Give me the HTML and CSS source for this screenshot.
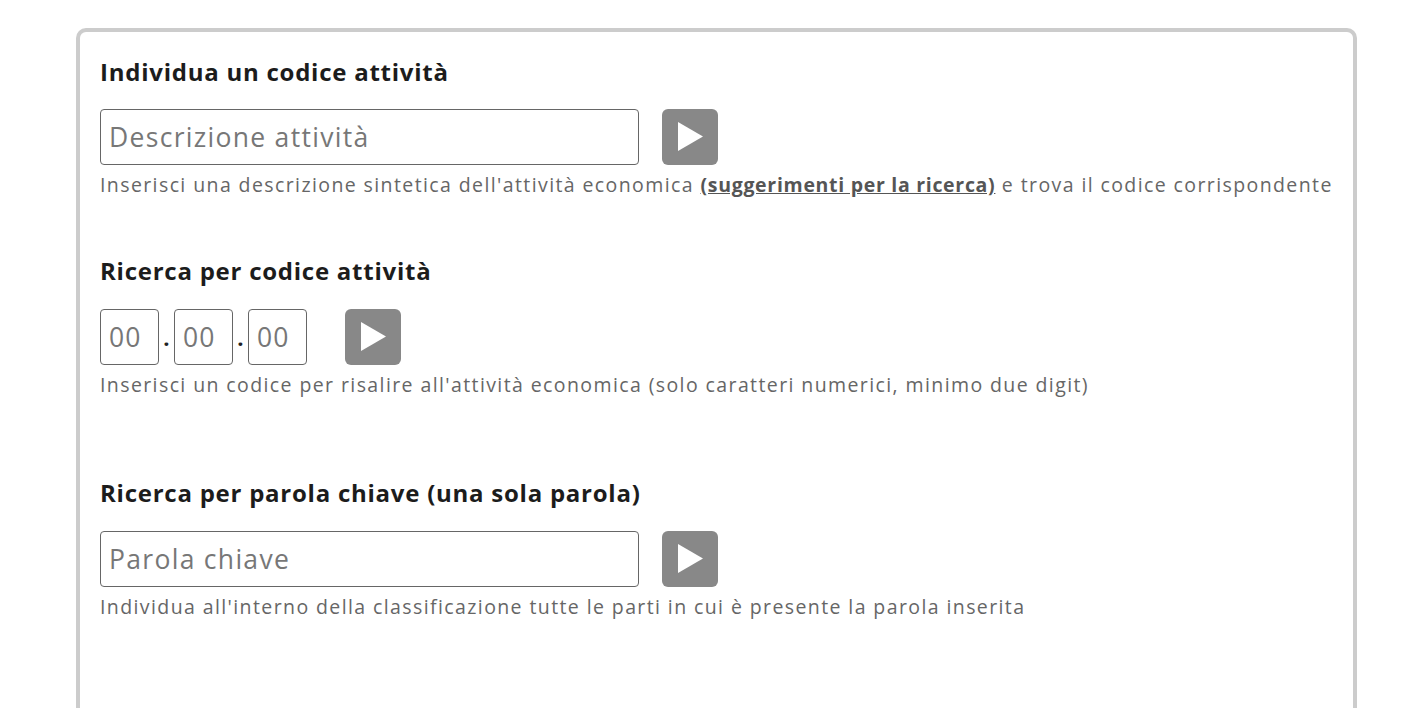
FILE: index.html
```html
<!DOCTYPE html>
<html lang="it">
<head>
  <meta charset="UTF-8">
  <title>Ricerca codice attività</title>
  <link rel="stylesheet" href="styles.css">
</head>
<body>

  <div class="panel">

    <div class="search-block first">
      <h2>Individua un codice attività</h2>
      <div class="search-row">
        <input type="text" class="text-input" placeholder="Descrizione attività">
        <button class="go-btn" type="button" aria-label="Cerca">
          <svg viewBox="0 0 56 56" width="56" height="56"><polygon points="16,13 41,27.5 16,42" fill="#fff"/></svg>
        </button>
      </div>
      <p class="help">Inserisci una descrizione sintetica dell'attività economica <a href="#">(suggerimenti per la ricerca)</a> e trova il codice corrispondente</p>
    </div>

    <div class="search-block">
      <h2>Ricerca per codice attività</h2>
      <div class="search-row">
        <div class="code-fields">
          <input type="text" class="code-input" placeholder="00" maxlength="2">
          <span class="dot">.</span>
          <input type="text" class="code-input" placeholder="00" maxlength="2">
          <span class="dot">.</span>
          <input type="text" class="code-input" placeholder="00" maxlength="2">
        </div>
        <button class="go-btn" type="button" aria-label="Cerca">
          <svg viewBox="0 0 56 56" width="56" height="56"><polygon points="16,13 41,27.5 16,42" fill="#fff"/></svg>
        </button>
      </div>
      <p class="help">Inserisci un codice per risalire all'attività economica (solo caratteri numerici, minimo due digit)</p>
    </div>

    <div class="search-block third">
      <h2>Ricerca per parola chiave (una sola parola)</h2>
      <div class="search-row">
        <input type="text" class="text-input" placeholder="Parola chiave">
        <button class="go-btn" type="button" aria-label="Cerca">
          <svg viewBox="0 0 56 56" width="56" height="56"><polygon points="16,13 41,27.5 16,42" fill="#fff"/></svg>
        </button>
      </div>
      <p class="help">Individua all'interno della classificazione tutte le parti in cui è presente la parola inserita</p>
    </div>

  </div>

</body>
</html>
```

FILE: styles.css
```css
body {
  margin: 0;
  font-family: "Open Sans", "Noto Sans", sans-serif;
  background: #fff;
  overflow: hidden;
}

.panel {
  margin: 28px 0 0 76px;
  width: 1281px;
  min-height: 720px;
  box-sizing: border-box;
  border: 4px solid #ccc;
  border-bottom: none;
  border-radius: 10px 10px 0 0;
  padding: 25px 20px 0;
}

h2 {
  margin: 0;
  font-size: 24px;
  line-height: 30px;
  font-weight: 700;
  color: #1c1c1c;
  letter-spacing: 0.75px;
}

.search-block {
  margin-top: 59px;
}

.search-block.first {
  margin-top: 0;
}

.search-block.third {
  margin-top: 81px;
}

.search-row {
  display: flex;
  align-items: center;
  margin-top: 23px;
}

.first .search-row {
  margin-top: 22px;
}

.text-input {
  width: 539px;
  height: 56px;
  box-sizing: border-box;
  border: 1px solid #666;
  border-radius: 4px;
  padding: 0 8px;
  font-family: inherit;
  font-size: 26.5px;
  letter-spacing: 1.3px;
  color: #333;
}

.text-input::placeholder,
.code-input::placeholder {
  color: #777;
}

.code-fields {
  display: flex;
  align-items: center;
}

.code-input {
  width: 59px;
  height: 56px;
  box-sizing: border-box;
  border: 1px solid #666;
  border-radius: 4px;
  padding: 0 8px;
  font-family: inherit;
  font-size: 26.5px;
  letter-spacing: 1px;
  color: #333;
}

.dot {
  width: 15px;
  text-align: center;
  font-size: 22px;
  line-height: 22px;
  font-weight: 700;
  color: #222;
  padding-top: 0;
}

.go-btn {
  width: 56px;
  height: 56px;
  margin-left: 23px;
  padding: 0;
  border: none;
  border-radius: 6px;
  background: #888;
  cursor: pointer;
}

.code-fields + .go-btn {
  margin-left: 38px;
}

.go-btn svg {
  display: block;
}

.help {
  margin: 8px 0 0;
  font-size: 19.5px;
  line-height: 24px;
  color: #666;
  letter-spacing: 1.4px;
}

.help a {
  color: #555;
  font-weight: 700;
  letter-spacing: 0.7px;
  text-decoration: underline;
}
```
